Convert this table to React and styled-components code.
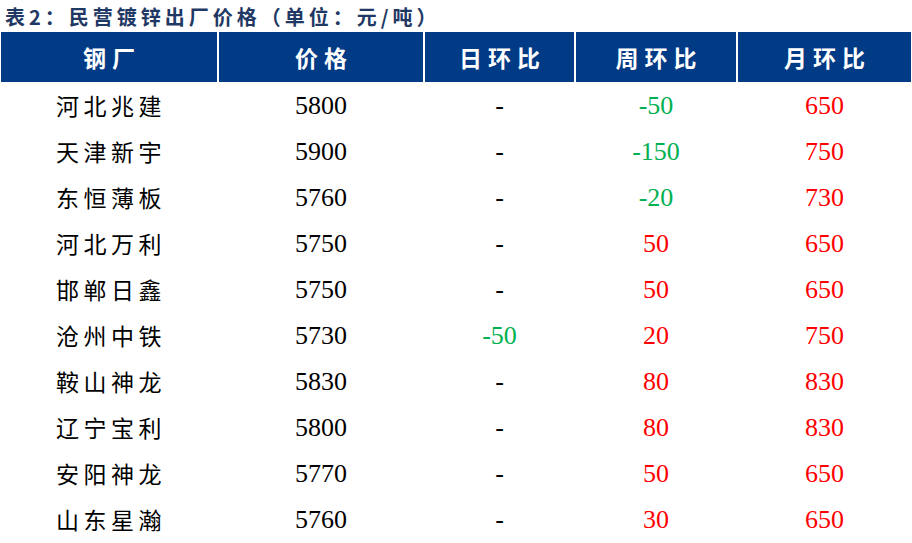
import React from "react";
import styled, { createGlobalStyle } from "styled-components";

const GlobalStyle = createGlobalStyle`
  html, body {
    margin: 0;
    padding: 0;
    background: #ffffff;
  }
`;

const columns = "216px 204px 149px 160px 173px";

const Page = styled.div`
  width: 912px;
  height: 543px;
  overflow: hidden;
  background: #ffffff;
`;

const Title = styled.div`
  height: 32px;
  display: flex;
  align-items: center;
  padding-left: 5px;
  padding-top: 1px;
  box-sizing: border-box;
  font-family: "Noto Sans CJK SC", "Liberation Sans", sans-serif;
  font-size: 20px;
  font-weight: 700;
  letter-spacing: 4px;
  color: #1f3864;
  white-space: nowrap;
`;

const HeaderRow = styled.div`
  display: grid;
  grid-template-columns: ${columns};
  column-gap: 2px;
  padding-left: 1px;
  height: 50px;
`;

const HeadCell = styled.div`
  background: #013a85;
  color: #ffffff;
  display: flex;
  align-items: center;
  justify-content: center;
  padding-left: 6px;
  font-family: "Noto Sans CJK SC", sans-serif;
  font-size: 23px;
  font-weight: 700;
  letter-spacing: 6px;
`;

const Row = styled.div`
  display: grid;
  grid-template-columns: ${columns};
  column-gap: 2px;
  padding-left: 1px;
  height: 46px;
`;

const Cell = styled.div`
  display: flex;
  align-items: center;
  justify-content: center;
  padding-top: 2px;
  color: ${(p) => p.$color || "#000000"};
  font-family: "Liberation Serif", "Times New Roman", serif;
  font-size: 26px;
`;

const NameCell = styled(Cell)`
  font-family: "Noto Sans CJK SC", sans-serif;
  font-size: 23px;
  letter-spacing: 4.5px;
  padding-left: 4px;
  padding-top: 0;
`;

const GREEN = "#00b050";
const RED = "#ff0000";

const tone = (v) => {
  if (v === "-") return "#000000";
  return v.startsWith("-") ? GREEN : RED;
};

const rows = [
  ["河北兆建", "5800", "-", "-50", "650"],
  ["天津新宇", "5900", "-", "-150", "750"],
  ["东恒薄板", "5760", "-", "-20", "730"],
  ["河北万利", "5750", "-", "50", "650"],
  ["邯郸日鑫", "5750", "-", "50", "650"],
  ["沧州中铁", "5730", "-50", "20", "750"],
  ["鞍山神龙", "5830", "-", "80", "830"],
  ["辽宁宝利", "5800", "-", "80", "830"],
  ["安阳神龙", "5770", "-", "50", "650"],
  ["山东星瀚", "5760", "-", "30", "650"],
];

const heads = ["钢厂", "价格", "日环比", "周环比", "月环比"];

const App = () => {
  return (
    <>
      <GlobalStyle />
      <Page>
        <Title>表2：民营镀锌出厂价格（单位：元/吨）</Title>
        <HeaderRow>
          {heads.map((h) => (
            <HeadCell key={h}>{h}</HeadCell>
          ))}
        </HeaderRow>
        {rows.map(([name, price, day, week, month]) => (
          <Row key={name}>
            <NameCell>{name}</NameCell>
            <Cell>{price}</Cell>
            <Cell $color={tone(day)}>{day}</Cell>
            <Cell $color={tone(week)}>{week}</Cell>
            <Cell $color={tone(month)}>{month}</Cell>
          </Row>
        ))}
      </Page>
    </>
  );
};

export default App;
